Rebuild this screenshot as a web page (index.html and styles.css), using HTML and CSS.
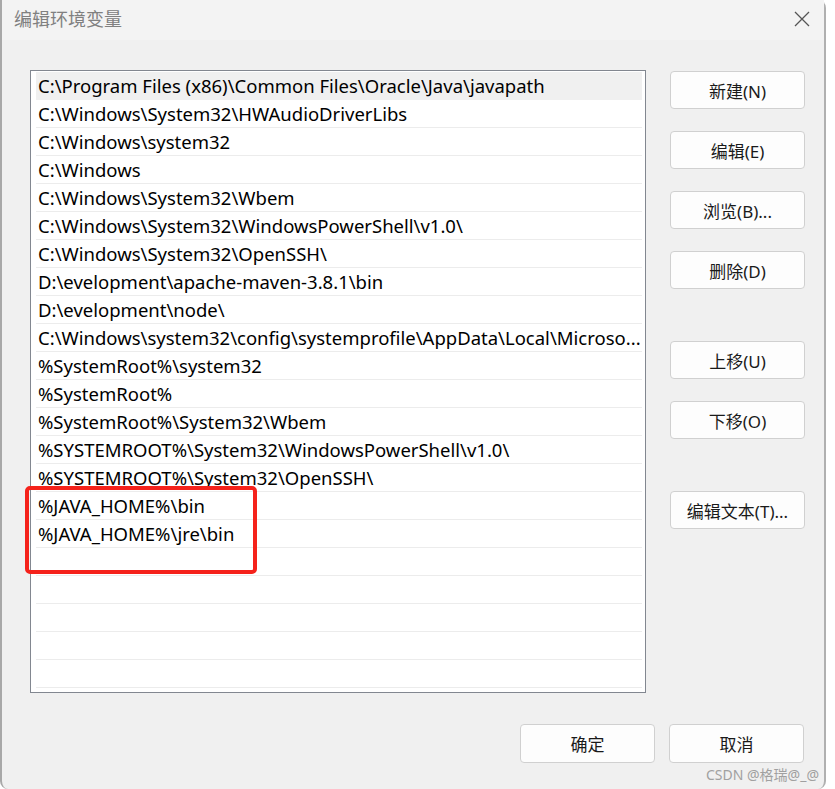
FILE: index.html
```html
<!DOCTYPE html>
<html lang="zh-CN">
<head>
    <title>编辑环境变量</title>
    <meta charset="UTF-8" />
    <link rel="stylesheet" href="styles.css">
</head>
<body>
    <div class="dialog">
        <div class="titlebar">
            <span class="title">编辑环境变量</span>
            <svg class="close" width="16" height="16" viewBox="0 0 16 16">
                <path d="M1 1 L15 15 M15 1 L1 15" stroke="#555" stroke-width="1.3" fill="none" />
            </svg>
        </div>

        <div class="content">
            <div class="list">
                <div class="row selected">C:\Program Files (x86)\Common Files\Oracle\Java\javapath</div>
                <div class="row">C:\Windows\System32\HWAudioDriverLibs</div>
                <div class="row">C:\Windows\system32</div>
                <div class="row">C:\Windows</div>
                <div class="row">C:\Windows\System32\Wbem</div>
                <div class="row">C:\Windows\System32\WindowsPowerShell\v1.0\</div>
                <div class="row">C:\Windows\System32\OpenSSH\</div>
                <div class="row">D:\evelopment\apache-maven-3.8.1\bin</div>
                <div class="row">D:\evelopment\node\</div>
                <div class="row">C:\Windows\system32\config\systemprofile\AppData\Local\Microso...</div>
                <div class="row">%SystemRoot%\system32</div>
                <div class="row">%SystemRoot%</div>
                <div class="row">%SystemRoot%\System32\Wbem</div>
                <div class="row">%SYSTEMROOT%\System32\WindowsPowerShell\v1.0\</div>
                <div class="row">%SYSTEMROOT%\System32\OpenSSH\</div>
                <div class="row">%JAVA_HOME%\bin</div>
                <div class="row">%JAVA_HOME%\jre\bin</div>
                <div class="row"></div>
                <div class="row"></div>
                <div class="row"></div>
                <div class="row"></div>
                <div class="row"></div>
            </div>

            <div class="side-buttons">
                <button>新建(N)</button>
                <button>编辑(E)</button>
                <button>浏览(B)...</button>
                <button>删除(D)</button>
                <button class="gap">上移(U)</button>
                <button>下移(O)</button>
                <button class="gap">编辑文本(T)...</button>
            </div>

            <div class="highlight"></div>
        </div>

        <div class="footer">
            <button>确定</button>
            <button>取消</button>
        </div>
        <div class="watermark">CSDN @格瑞@_@</div>
    </div>
</body>
</html>
```

FILE: styles.css
```css
* {
    margin: 0;
    padding: 0;
    box-sizing: border-box;
}

body {
    width: 835px;
    height: 789px;
    overflow: hidden;
    background: #ffffff;
    font-family: "Noto Sans", "Noto Sans CJK SC", sans-serif;
    color: #000;
}

.dialog {
    position: relative;
    width: 826px;
    height: 789px;
    background: #f0f0f0;
    border-left: 2px solid #a8a8a8;
    border-right: 2px solid #b0b0b0;
    border-radius: 0 8px 8px 8px;
}

.titlebar {
    height: 40px;
    background: #f3f3f3;
    display: flex;
    align-items: center;
    justify-content: space-between;
    padding: 0 14px 4px 12px;
}

.title {
    font-size: 18px;
    color: #808080;
}

.close {
    margin-top: 2px;
}

.content {
    position: relative;
    display: flex;
    padding: 30px 0 0 28px;
    gap: 24px;
}

.list {
    width: 616px;
    height: 623px;
    background: #ffffff;
    border: 1px solid #828790;
    padding: 1px 3px 0 5px;
    overflow: hidden;
}

.row {
    height: 28px;
    line-height: 27px;
    border-bottom: 1px solid #ececec;
    padding-left: 2px;
    padding-right: 4px;
    font-size: 18.5px;
    white-space: nowrap;
    overflow: hidden;
}

.row.selected {
    background: #f0f0f0;
    border-bottom-color: #f0f0f0;
}

/* red box drawn over the two JAVA_HOME rows */
.highlight {
    position: absolute;
    left: 23px;
    top: 446px;
    width: 232px;
    height: 88px;
    border: 4px solid #f5221b;
    border-radius: 5px;
}

.side-buttons {
    display: flex;
    flex-direction: column;
    gap: 22px;
    padding-top: 1px;
}

.side-buttons .gap {
    margin-top: 30px;
}

button {
    width: 135px;
    height: 38px;
    background: #fdfdfd;
    border: 1px solid #d0d0d0;
    border-radius: 4px;
    font-family: "Noto Sans", "Noto Sans CJK SC", sans-serif;
    font-size: 17px;
    color: #1a1a1a;
}

.footer {
    display: flex;
    justify-content: flex-end;
    gap: 14px;
    padding: 31px 20px 0 0;
}

.footer button {
    height: 39px;
}

.watermark {
    position: absolute;
    right: 5px;
    bottom: 5px;
    font-family: "Noto Sans", "Noto Sans CJK SC", sans-serif;
    font-size: 14px;
    color: #a0a0a0;
}
```
